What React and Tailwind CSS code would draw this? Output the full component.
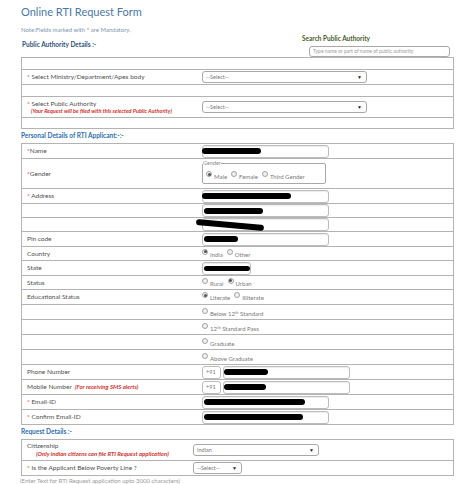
import React from "react";

function Radio({ checked }) {
  return (
    <span className="flex items-center justify-center shrink-0 w-[6px] h-[6px] rounded-full border border-[#a3a3a3] bg-[#f1f1f1]">
      {checked && <span className="w-[3px] h-[3px] rounded-full bg-[#555]" />}
    </span>
  );
}

function Opt({ checked, children }) {
  return (
    <span className="flex items-start gap-[2px] mr-[4px]">
      <Radio checked={checked} />
      <span className="mt-[2px] text-[6px] leading-[7px] text-[#7a7a7a]">{children}</span>
    </span>
  );
}

function Input({ w = "w-[127px]", children }) {
  return (
    <div className={`h-[13px] ${w} border border-[#bcbcbc] rounded-[3px] bg-white flex items-center shadow-[inset_0_1px_1px_rgba(0,0,0,0.08)]`}>
      {children}
    </div>
  );
}

function Blob({ w, h = "h-[6px]", extra = "" }) {
  return <div className={`${w} ${h} bg-black rounded-full ${extra}`} />;
}

function Select({ w, text = "--Select--" }) {
  return (
    <div className={`h-[12px] ${w} border border-[#a8a8a8] rounded-[3px] bg-white flex items-center justify-between pl-[3px] pr-[4px]`}>
      <span className="text-[5.5px] leading-[6px] text-[#7a7a7a]">{text}</span>
      <span className="text-[5px] leading-[5px] text-[#222]">▼</span>
    </div>
  );
}

function Row({ h = "h-[15px]", label, children, lw = "w-[180px]", items = "items-center" }) {
  return (
    <div className={`flex ${items} border-b border-[#b3b3b3] ${h}`}>
      <div className={`${lw} shrink-0 pl-[5px] text-[6.5px] leading-[8px] text-[#505050]`}>{label}</div>
      <div className="flex items-center">{children}</div>
    </div>
  );
}

const Star = () => <span className="text-[#d0302c]">*</span>;

export default function App() {
  return (
    <div className="w-[474px] h-[484px] overflow-hidden bg-white pl-[21px] font-['Lato','Open_Sans',sans-serif]">
      <div className="h-[24px] flex items-center text-[11px] text-[#4a78a6]">Online RTI Request Form</div>
      <div className="h-[10px] flex items-center text-[6px] text-[#7d97b0]">
        Note:Fields marked with&nbsp;<span className="text-[#d0302c]">*</span>&nbsp;are Mandatory.
      </div>
      <div className="h-[23px] w-[433px] flex justify-between">
        <div className="self-center pb-[2px] pl-[1px] text-[6.5px] font-bold text-[#2f5278]">Public Authority Details :-</div>
        <div className="w-[148px] mr-[4px] flex flex-col">
          <div className="h-[10px] flex items-center text-[6.5px] font-bold text-[#4b5a2b]">Search Public Authority</div>
          <div className="mt-[2px] ml-[7px] h-[11px] w-[141px] border border-[#a8a8a8] rounded-[3px] flex items-center pl-[3px] text-[5px] text-[#9a9a9a]">
            Type name or part of name of public authority
          </div>
        </div>
      </div>

      <div className="w-[433px] border border-[#b3b3b3] border-b-0">
        <Row h="h-[12px]" />
        <Row label={<><Star /> Select Ministry/Department/Apex body</>}>
          <Select w="w-[165px]" />
        </Row>
        <Row h="h-[12px]" />
        <Row
          h="h-[21px]"
          label={
            <>
              <div><Star /> Select Public Authority</div>
              <div className="pl-[4px] text-[5.5px] leading-[7px] italic font-bold text-[#d0302c]">
                (Your Request will be filed with this selected Public Authority)
              </div>
            </>
          }
        >
          <Select w="w-[165px]" />
        </Row>
        <Row h="h-[11px]" />
      </div>

      <div className="h-[14px] flex items-center text-[6.5px] font-bold text-[#2d6fb0]">Personal Details of RTI Applicant:-:-</div>

      <div className="w-[433px] border border-[#b3b3b3] border-b-0">
        <Row label={<><Star />Name</>}>
          <Input><Blob w="w-[59px]" extra="-ml-[1px]" /></Input>
        </Row>
        <Row h="h-[30px]" label={<><Star />Gender</>}>
          <fieldset className="w-[124px] h-[24px] -mt-[3px] border border-[#a8a8a8] rounded-[2px] px-[3px] pt-0 pb-[3px] flex items-end">
            <legend className="text-[5.5px] leading-[6px] text-[#8a8a8a] -ml-[3px]">Gender</legend>
            <Opt checked>Male</Opt>
            <Opt>Female</Opt>
            <Opt>Third Gender</Opt>
          </fieldset>
        </Row>
        <Row label={<><Star /> Address</>}>
          <Input><Blob w="w-[89px]" extra="-ml-[1px]" /></Input>
        </Row>
        <Row h="h-[14px]">
          <Input><Blob w="w-[59px]" extra="ml-[1px]" /></Input>
        </Row>
        <Row h="h-[14px]">
          <Input><Blob w="w-[68px]" extra="-ml-[7px] rotate-[5deg]" /></Input>
        </Row>
        <Row label="Pin code">
          <Input><Blob w="w-[34px]" extra="ml-[1px]" /></Input>
        </Row>
        <Row h="h-[14px]" label="Country">
          <div className="flex -mt-[1px]">
            <Opt checked>India</Opt>
            <Opt>Other</Opt>
          </div>
        </Row>
        <Row label="State">
          <Input w="w-[49px]"><Blob w="w-[46px]" extra="ml-[1px]" h="h-[5px]" /></Input>
        </Row>
        <Row h="h-[14px]" label="Status">
          <div className="flex -mt-[1px]">
            <Opt>Rural</Opt>
            <Opt checked>Urban</Opt>
          </div>
        </Row>
        <Row label="Educational Status">
          <div className="flex -mt-[1px]">
            <Opt checked>Literate</Opt>
            <Opt>Illiterate</Opt>
          </div>
        </Row>
        <Row>
          <Opt>Below 12<sup className="text-[4px]">th</sup> Standard</Opt>
        </Row>
        <Row>
          <Opt>12<sup className="text-[4px]">th</sup> Standard Pass</Opt>
        </Row>
        <Row>
          <Opt>Graduate</Opt>
        </Row>
        <Row>
          <Opt>Above Graduate</Opt>
        </Row>
        <Row label="Phone Number">
          <div className="flex items-center gap-[2px]">
            <div className="h-[13px] w-[19px] border border-[#bcbcbc] rounded-[3px] flex items-center pl-[3px] text-[5.5px] text-[#7a7a7a]">+91</div>
            <Input w="w-[127px]"><Blob w="w-[44px]" /></Input>
          </div>
        </Row>
        <Row
          label={
            <>
              Mobile Number&nbsp;&nbsp;<span className="italic font-bold text-[6px] text-[#d0302c]">(For receiving SMS alerts)</span>
            </>
          }
        >
          <div className="flex items-center gap-[2px]">
            <div className="h-[13px] w-[19px] border border-[#bcbcbc] rounded-[3px] flex items-center pl-[3px] text-[5.5px] text-[#7a7a7a]">+91</div>
            <Input w="w-[127px]"><Blob w="w-[42px]" /></Input>
          </div>
        </Row>
        <Row label={<><Star /> Email-ID</>}>
          <Input><Blob w="w-[101px]" extra="ml-[1px]" /></Input>
        </Row>
        <Row label={<><Star /> Confirm Email-ID</>}>
          <Input><Blob w="w-[99px]" extra="ml-[1px]" /></Input>
        </Row>
      </div>

      <div className="h-[14px] flex items-center text-[6.5px] font-bold text-[#2d6fb0]">Request Details :-</div>

      <div className="w-[433px] border border-[#b3b3b3] border-b-0">
        <Row
          h="h-[21px]"
          lw="w-[171px]"
          label={
            <>
              <div>Citizenship</div>
              <div className="pl-[9px] text-[6px] leading-[8px] italic font-bold text-[#d0302c]">
                (Only indian citizens can file RTI Request application)
              </div>
            </>
          }
        >
          <Select w="w-[126px]" text="Indian" />
        </Row>
        <Row h="h-[15px]" lw="w-[171px]" label={<><Star /> Is the Applicant Below Poverty Line ?</>}>
          <Select w="w-[49px]" />
        </Row>
      </div>
      <div className="h-[9px] flex items-center text-[6px] leading-[7px] text-[#9a9a9a] -ml-[1px]">
        (Enter Text for RTI Request application upto 3000 characters)
      </div>
    </div>
  );
}
